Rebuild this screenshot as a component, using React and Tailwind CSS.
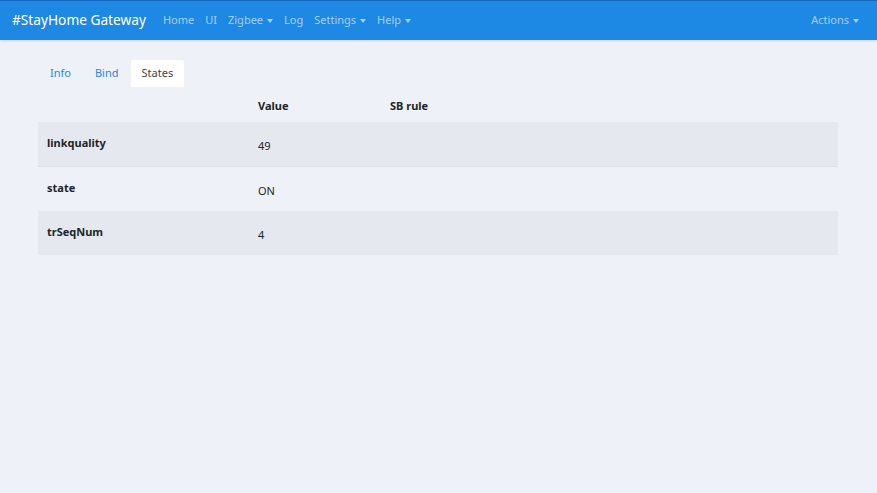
const NAV = [
  { label: 'Home' },
  { label: 'UI' },
  { label: 'Zigbee', drop: true },
  { label: 'Log' },
  { label: 'Settings', drop: true },
  { label: 'Help', drop: true },
]

const ROWS = [
  { name: 'linkquality', value: '49', h: 'h-[44px]' },
  { name: 'state', value: 'ON', h: 'h-[45px]' },
  { name: 'trSeqNum', value: '4', h: 'h-[44px]' },
]

function Caret() {
  return <span className="inline-block ml-[4px] align-middle border-x-[3.5px] border-x-transparent border-t-[4px] border-t-current" />
}

export default function App() {
  return (
    <div
      className="min-h-[493px] bg-gradient-to-b from-[#eef2f7] to-[#eef1f9] text-[#212529]"
      style={{ fontFamily: '"Noto Sans", "Open Sans", sans-serif' }}
    >
      <nav className="h-[40px] bg-[#1e88e5] border-t border-[#1565c0] flex items-center pl-[12px] pr-[18px] shadow-[0_1px_2px_rgba(0,0,0,0.12)]">
        <span className="text-white text-[13.7px] mr-[17px]">#StayHome Gateway</span>
        <div className="flex items-center gap-[11px] text-[11px] text-white/60">
          {NAV.map((n) => (
            <span key={n.label} className="flex items-center">
              {n.label}
              {n.drop && <Caret />}
            </span>
          ))}
        </div>
        <div className="flex-1" />
        <span className="flex items-center text-[11px] text-white/60">
          Actions
          <Caret />
        </span>
      </nav>

      <div className="px-[38px] pt-[20px]">
        <div className="flex items-end text-[11px]">
          <span className="px-[12px] h-[27px] flex items-center text-[#1e88e5]">Info</span>
          <span className="px-[12px] h-[27px] flex items-center text-[#1e88e5]">Bind</span>
          <span className="px-[11px] h-[27px] flex items-center bg-white rounded-t-[3px] text-[#444]">States</span>
        </div>

        <table className="w-[800px] text-[11px] border-collapse">
          <thead>
            <tr className="h-[35px]">
              <th className="w-[212px]" />
              <th className="w-[132px] text-left font-bold px-[8px] pt-[3px]">Value</th>
              <th className="text-left font-bold px-[8px] pt-[3px]">SB rule</th>
            </tr>
          </thead>
          <tbody>
            {ROWS.map((r, i) => (
              <tr key={r.name} className={`${r.h} ${i % 2 === 0 ? 'bg-[#e5e8ee]' : ''} ${i === 0 ? 'border-b border-[#dde1e7]' : ''}`}>
                <th className="text-left font-bold px-[9px] align-top pt-[13px]">{r.name}</th>
                <td className="px-[8px] align-top pt-[16px]">{r.value}</td>
                <td />
              </tr>
            ))}
          </tbody>
        </table>
      </div>
    </div>
  )
}
